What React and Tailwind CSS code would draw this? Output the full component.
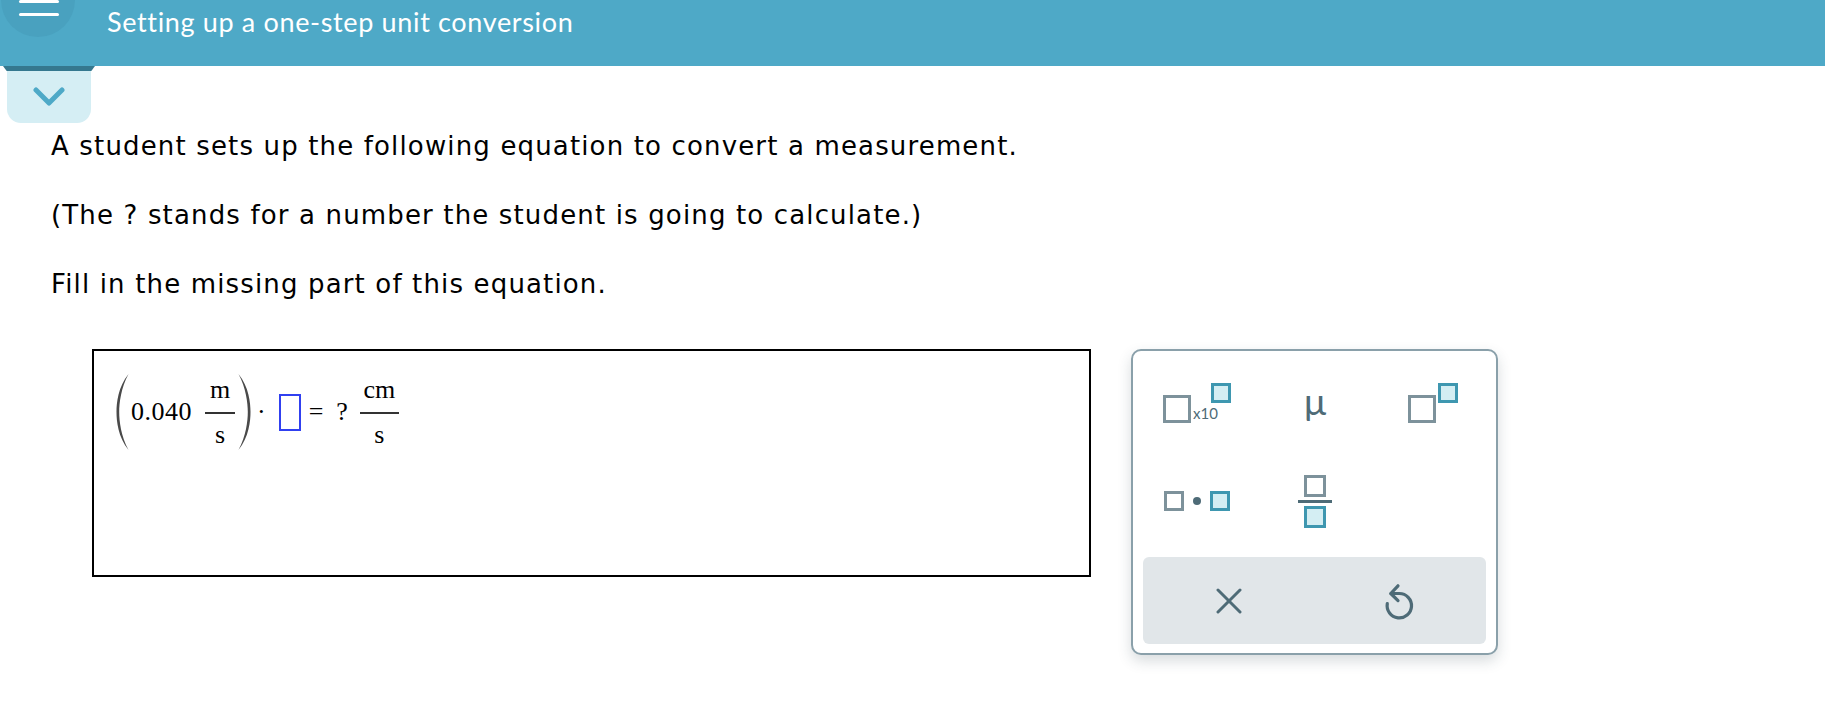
import { Fragment } from "react";

const serif = "font-['Liberation_Serif','Times_New_Roman',serif]";

const GrayBox = ({ size = "w-[28px] h-[28px]" }) => (
  <div className={`${size} border-[3px] border-[#7d929b] bg-white`} />
);

const TealBox = ({ size = "w-[20px] h-[20px]" }) => (
  <div className={`${size} border-[3px] border-[#3e97b0] bg-[#d4eef3]`} />
);

const Paren = ({ flip }) => (
  <svg width="15" height="78" viewBox="0 0 15 78" className={flip ? "-scale-x-100" : ""}>
    <path d="M13.5 1 C3 14 1.5 30 1.5 39 C1.5 48 3 64 13.5 77 C6 63 4.2 48 4.2 39 C4.2 30 6 15 13.5 1 Z" fill="#4a4a4a" />
  </svg>
);

const Frac = ({ top, bottom, width }) => (
  <div className={`flex flex-col items-center ${width}`}>
    <div className="leading-[26px] h-[26px]">{top}</div>
    <div className="mt-[9px] h-[2px] w-full bg-[#333]" />
    <div className="mt-[8px] leading-[26px] h-[26px]">{bottom}</div>
  </div>
);

const Equation = () => (
  <div className={`flex items-center pt-[22px] pl-[21px] text-[26px] text-black ${serif}`}>
    <Paren />
    <span className="ml-[1px] leading-[26px] tracking-[0.5px]">0.040</span>
    <div className="ml-[13px]">
      <Frac top="m" bottom="s" width="w-[30px]" />
    </div>
    <div className="ml-[2px]">
      <Paren flip />
    </div>
    <span className="ml-[5px] leading-[26px]">·</span>
    <div className="ml-[13px] w-[22px] h-[37px] border-2 border-[#3040f0]" />
    <span className="ml-[8px] leading-[26px]">=</span>
    <span className="ml-[13px] leading-[26px]">?</span>
    <div className="ml-[12px]">
      <Frac top="cm" bottom="s" width="w-[39px]" />
    </div>
  </div>
);

const UndoIcon = () => (
  <svg width="45" height="50" viewBox="0 0 45 50" fill="none" stroke="#4e6b77" strokeWidth="3.2" strokeLinecap="round" strokeLinejoin="round">
    <path d="M13 17.5 H21.3 A12.2 12.2 0 1 1 9.3 27.6" />
    <path d="M20 9.8 L12.8 17.5 L20 24.6" />
  </svg>
);

const ClearIcon = () => (
  <svg width="26" height="26" viewBox="0 0 26 26" fill="none" stroke="#4e6b77" strokeWidth="3" strokeLinecap="round">
    <path d="M2 2 L24 24" />
    <path d="M24 2 L2 24" />
  </svg>
);

const Keypad = () => (
  <div className="w-[367px] h-[306px] border-2 border-[#8aa0aa] rounded-[10px] bg-white shadow-[0_6px_14px_rgba(40,60,70,0.18)] px-[10px] pb-[9px] flex flex-col">
    {/* row 1 */}
    <div className="mt-[24px] h-[56px] grid grid-cols-[108px_128px_108px] items-center">
      <div className="flex justify-center">
        <div className="relative w-[68px] h-[40px]">
          <div className="absolute left-0 top-[12px]"><GrayBox /></div>
          <span className="absolute left-[30px] top-[23px] text-[15px] leading-[15px] text-[#4e6b77] font-['Lato',sans-serif]">x10</span>
          <div className="absolute left-[48px] top-0"><TealBox /></div>
        </div>
      </div>
      <div className="flex justify-center">
        <span className="mb-[4px] text-[37px] leading-[36px] text-[#4e6b77] font-['Lato',sans-serif]">μ</span>
      </div>
      <div className="flex justify-center">
        <div className="flex items-start gap-[2px] h-[40px]">
          <div className="mt-[12px]"><GrayBox /></div>
          <TealBox />
        </div>
      </div>
    </div>
    {/* row 2 */}
    <div className="mt-[42px] h-[56px] grid grid-cols-[108px_128px_108px] items-center">
      <div className="flex justify-center">
        <div className="flex items-center gap-[9px]">
          <GrayBox size="w-[20px] h-[20px]" />
          <div className="w-[8px] h-[8px] rounded-full bg-[#4e6b77]" />
          <TealBox />
        </div>
      </div>
      <div className="flex justify-center">
        <div className="flex flex-col items-center gap-[3px]">
          <GrayBox size="w-[22px] h-[22px]" />
          <div className="w-[34px] h-[3px] bg-[#4e6b77]" />
          <TealBox size="w-[22px] h-[22px]" />
        </div>
      </div>
      <div />
    </div>
    {/* actions */}
    <div className="mt-[28px] h-[87px] rounded-[6px] bg-[#e1e6e9] grid grid-cols-2 items-center">
      <div className="flex justify-center"><ClearIcon /></div>
      <div className="flex justify-center"><UndoIcon /></div>
    </div>
  </div>
);

const lines = [
  "A student sets up the following equation to convert a measurement.",
  "(The ? stands for a number the student is going to calculate.)",
  "Fill in the missing part of this equation.",
];

export default function App() {
  return (
    <div className="min-h-[716px] bg-white">
      {/* HEADER */}
      <div className="relative h-[66px] bg-[#4ea9c7] overflow-hidden">
        <div className="absolute left-[1px] top-[-37px] w-[74px] h-[74px] rounded-full bg-[#49a1bf]">
          <div className="absolute left-[18px] top-[37px] w-[40px] h-[3px] rounded-full bg-white" />
          <div className="absolute left-[18px] top-[50px] w-[40px] h-[3px] rounded-full bg-white" />
        </div>
        <div className="pl-[107px] pt-[8px] text-[27px] leading-[27px] tracking-[0.65px] text-white font-['Lato',sans-serif]">
          Setting up a one-step unit conversion
        </div>
      </div>

      {/* collapse tab */}
      <div className="ml-[3px] w-[92px]">
        <div className="h-[5px] bg-[#35788f] [clip-path:polygon(0_0,100%_0,96%_100%,4%_100%)]" />
        <div className="mx-[4px] h-[52px] rounded-b-[14px] bg-[#d5eef4] flex items-center justify-center">
          <svg width="32" height="20" viewBox="0 0 32 20" fill="none" stroke="#4ea9c7" strokeWidth="5" strokeLinecap="round" strokeLinejoin="round">
            <polyline points="3,3 16,16 29,3" />
          </svg>
        </div>
      </div>

      {/* question */}
      <div className="pl-[51px] mt-[8px] text-[26px] leading-[30px] tracking-[1.15px] text-black font-['DejaVu_Sans',sans-serif]">
        {lines.map((l, i) => (
          <Fragment key={i}>
            <p className={i < lines.length - 1 ? "mb-[39px]" : ""}>{l}</p>
          </Fragment>
        ))}
      </div>

      {/* answer area */}
      <div className="mt-[50px] ml-[92px] flex items-start gap-[40px]">
        <div className="w-[999px] h-[228px] border-2 border-black">
          <Equation />
        </div>
        <Keypad />
      </div>
    </div>
  );
}
